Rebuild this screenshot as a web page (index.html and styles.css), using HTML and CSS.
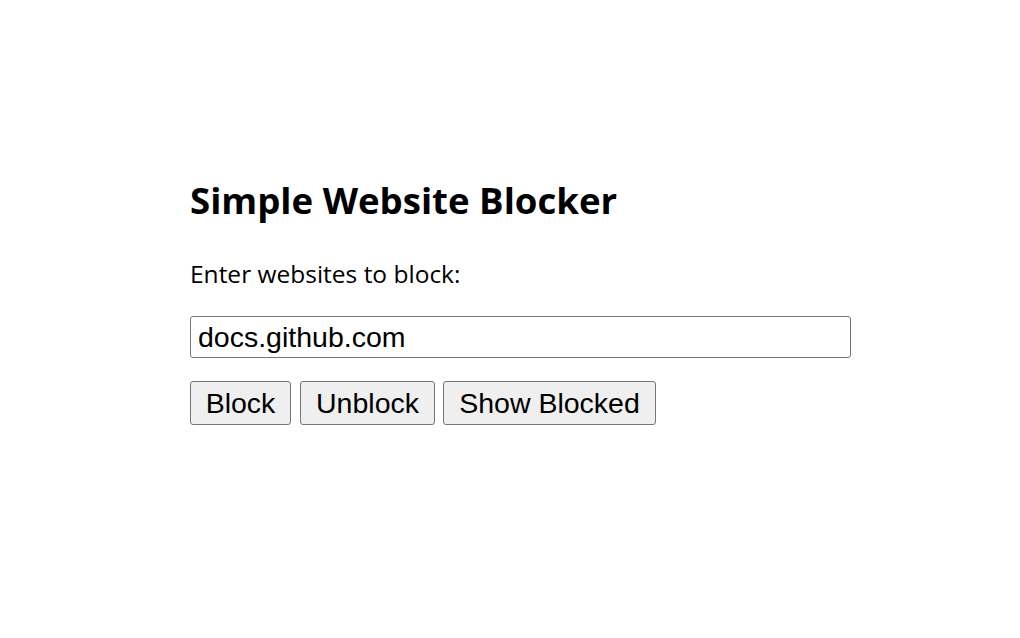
FILE: index.html
```html
<!DOCTYPE html>
<html>
<head>
<meta charset="utf-8">
<link rel="stylesheet" href="styles.css">
</head>
<body>
<main class="app">
  <h1 class="title">Simple Website Blocker</h1>
  <label class="label" for="site">Enter websites to block:</label>
  <input class="field" id="site" type="text" value="docs.github.com">
  <div class="actions">
    <button class="btn btn-block">Block</button>
    <button class="btn btn-unblock">Unblock</button>
    <button class="btn btn-show">Show Blocked</button>
  </div>
</main>
</body>
</html>
```

FILE: styles.css
```css
html, body {
  margin: 0;
  padding: 0;
  background: #ffffff;
}
.app {
  display: flex;
  flex-direction: column;
  align-items: flex-start;
  padding: 176px 0 0 190px;
  font-family: "Open Sans", "Noto Sans", sans-serif;
  color: #000;
}
.title {
  margin: 0;
  font-size: 36.6px;
  font-weight: 700;
  line-height: 48px;
}
.label {
  margin-top: 35px;
  font-size: 24.5px;
  line-height: 30px;
}
.field {
  margin-top: 27px;
  box-sizing: border-box;
  width: 661px;
  height: 42px;
  padding: 0 7px;
  border: 1.5px solid #767676;
  border-radius: 3px;
  font-family: "Liberation Sans", Arial, sans-serif;
  font-size: 28.5px;
  color: #000;
  outline: none;
}
.actions {
  display: flex;
  gap: 9px;
  margin-top: 23px;
}
.btn {
  box-sizing: border-box;
  height: 44px;
  padding: 0;
  border: 1.5px solid #767676;
  border-radius: 3px;
  background: #efefef;
  font-family: "Liberation Sans", Arial, sans-serif;
  font-size: 28.5px;
  color: #000;
}
.btn-block { width: 101px; }
.btn-unblock { width: 135px; }
.btn-show { width: 213px; margin-left: -1px; }
```
